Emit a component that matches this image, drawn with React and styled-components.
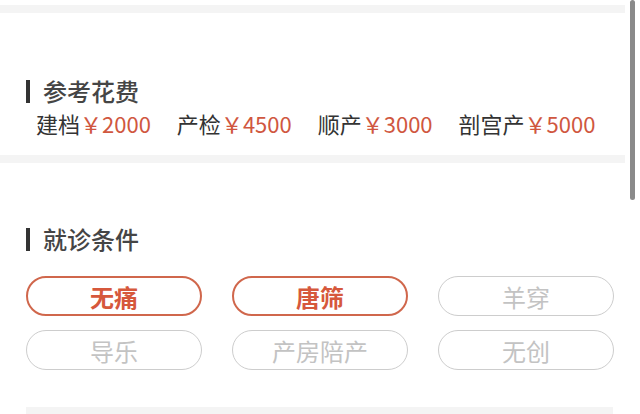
import React from "react";
import styled, { createGlobalStyle } from "styled-components";

const Global = createGlobalStyle`
  html, body { margin: 0; padding: 0; background: #fff; }
  body { font-family: "Noto Sans CJK SC", "Noto Sans", sans-serif; overflow: hidden; }
`;

const Page = styled.div`
  position: relative;
  width: 640px;
  height: 414px;
  overflow: hidden;
  background: #fff;
`;

const Column = styled.div`
  width: 625px;
  padding-top: 5px;
`;

const Band = styled.div`
  height: 8px;
  background: #f4f4f4;
`;

const Section = styled.section`
  padding: ${(p) => p.$pad};
`;

const Title = styled.h2`
  margin: 0 0 0 26px;
  display: flex;
  align-items: center;
  gap: 13px;
  height: 26px;
  font-size: 24px;
  font-weight: 500;
  color: #454545;
  line-height: 26px;
  &::before {
    content: "";
    width: 4px;
    height: 23px;
    background: #333;
  }
`;

const PriceRow = styled.div`
  display: flex;
  gap: 26px;
  margin: 7px 0 0 36px;
  font-size: 22px;
  line-height: 24px;
  color: #333;
`;

const PriceItem = styled.span`
  white-space: nowrap;
`;

const Amount = styled.span`
  color: #d0573f;
`;

const ChipGrid = styled.div`
  display: grid;
  grid-template-columns: repeat(3, 176px);
  column-gap: 30px;
  row-gap: 14px;
  margin: 24px 0 0 26px;
`;

const Chip = styled.div`
  box-sizing: border-box;
  height: 40px;
  border-radius: 20px;
  border: ${(p) => (p.$active ? "2px solid #d0674c" : "1.5px solid #cdcdcd")};
  color: ${(p) => (p.$active ? "#d6583c" : "#c3c3c3")};
  font-weight: ${(p) => (p.$active ? 700 : 400)};
  font-size: 24px;
  display: flex;
  align-items: center;
  justify-content: center;
`;

const BottomBox = styled.div`
  margin-left: 26px;
  width: 587px;
  height: 20px;
  background: #f4f4f4;
`;

const Scrollbar = styled.div`
  position: absolute;
  top: 0;
  left: 630px;
  width: 5px;
  height: 200px;
  border-radius: 3px;
  background: #8a8a8a;
`;

const prices = [
  ["建档", "￥2000"],
  ["产检", "￥4500"],
  ["顺产", "￥3000"],
  ["剖宫产", "￥5000"],
];

const chips = [
  ["无痛", true],
  ["唐筛", true],
  ["羊穿", false],
  ["导乐", false],
  ["产房陪产", false],
  ["无创", false],
];

export default function App() {
  return (
    <Page>
      <Global />
      <Column>
        <Band />
        <Section $pad="65px 0 20px">
          <Title>参考花费</Title>
          <PriceRow>
            {prices.map(([l, a]) => (
              <PriceItem key={l}>
                {l}
                <Amount>{a}</Amount>
              </PriceItem>
            ))}
          </PriceRow>
        </Section>
        <Band />
        <Section $pad="63px 0 37px">
          <Title>就诊条件</Title>
          <ChipGrid>
            {chips.map(([t, a]) => (
              <Chip key={t} $active={a}>
                {t}
              </Chip>
            ))}
          </ChipGrid>
        </Section>
        <BottomBox />
      </Column>
      <Scrollbar />
    </Page>
  );
}
